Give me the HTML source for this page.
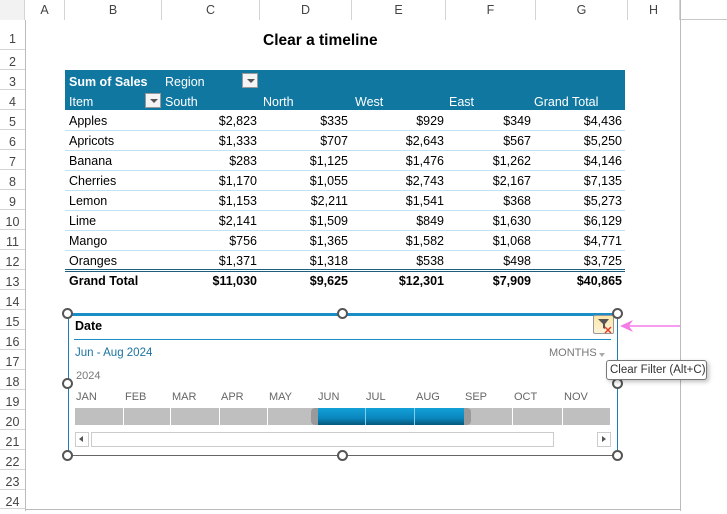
<!DOCTYPE html><html><head><style>
*{margin:0;padding:0;box-sizing:border-box}
body{width:727px;height:511px;background:#fff;position:relative;overflow:hidden;font-family:"Liberation Sans",sans-serif;font-size:12.5px;color:#000}
.a{position:absolute}
.ch{position:absolute;top:0;height:20px;line-height:21px;text-align:center;color:#444;font-size:12.5px;border-right:1px solid #d4d4d4;background:#fff}
.rh{position:absolute;left:0;width:25px;text-align:center;color:#444;border-bottom:1px solid #d4d4d4}
.v{position:absolute;text-align:right}
.hd{position:absolute;color:#fff}
.hl{position:absolute;width:11px;height:11px;border:2px solid #555;border-radius:50%;background:#fff}
.m{position:absolute;top:391px;color:#666;font-size:11px}
</style></head><body>
<div class="a" style="left:0;top:0;width:727px;height:20px;background:#fff;border-bottom:1px solid #c8c8c8"></div>
<div class="a" style="left:0;top:0;width:25px;height:20px;background:#f2f2f2;border-right:1px solid #d4d4d4"></div>
<div class="ch" style="left:25px;width:40px">A</div>
<div class="ch" style="left:65px;width:97px">B</div>
<div class="ch" style="left:162px;width:98px">C</div>
<div class="ch" style="left:260px;width:92px">D</div>
<div class="ch" style="left:352px;width:94px">E</div>
<div class="ch" style="left:446px;width:90px">F</div>
<div class="ch" style="left:536px;width:92px">G</div>
<div class="ch" style="left:628px;width:52px">H</div>
<div class="a" style="left:25px;top:20px;width:1px;height:491px;background:#bbb"></div>
<div class="a" style="left:680px;top:0;width:1px;height:511px;background:#bbb"></div>
<div class="a" style="left:25px;top:509px;width:656px;height:1px;background:#bbb"></div>
<div class="rh" style="top:20px;height:30px;line-height:38px">1</div>
<div class="rh" style="top:50px;height:20px;line-height:24px">2</div>
<div class="rh" style="top:70px;height:20px;line-height:24px">3</div>
<div class="rh" style="top:90px;height:20px;line-height:24px">4</div>
<div class="rh" style="top:110px;height:20px;line-height:24px">5</div>
<div class="rh" style="top:130px;height:20px;line-height:24px">6</div>
<div class="rh" style="top:150px;height:20px;line-height:24px">7</div>
<div class="rh" style="top:170px;height:20px;line-height:24px">8</div>
<div class="rh" style="top:190px;height:20px;line-height:24px">9</div>
<div class="rh" style="top:210px;height:20px;line-height:24px">10</div>
<div class="rh" style="top:230px;height:20px;line-height:24px">11</div>
<div class="rh" style="top:250px;height:20px;line-height:24px">12</div>
<div class="rh" style="top:270px;height:20px;line-height:24px">13</div>
<div class="rh" style="top:290px;height:20px;line-height:24px">14</div>
<div class="rh" style="top:310px;height:20px;line-height:24px">15</div>
<div class="rh" style="top:330px;height:20px;line-height:24px">16</div>
<div class="rh" style="top:350px;height:20px;line-height:24px">17</div>
<div class="rh" style="top:370px;height:20px;line-height:24px">18</div>
<div class="rh" style="top:390px;height:20px;line-height:24px">19</div>
<div class="rh" style="top:410px;height:20px;line-height:24px">20</div>
<div class="rh" style="top:430px;height:20px;line-height:24px">21</div>
<div class="rh" style="top:450px;height:20px;line-height:24px">22</div>
<div class="rh" style="top:470px;height:20px;line-height:24px">23</div>
<div class="rh" style="top:490px;height:19px;line-height:24px">24</div>

<div class="a" style="left:263px;top:32px;font-weight:bold;font-size:15.5px">Clear a timeline</div>

<div class="a" style="left:65px;top:70px;width:560px;height:40px;background:#0f77a0"></div>
<div class="hd" style="left:69px;top:75px;font-weight:bold">Sum of Sales</div>
<div class="hd" style="left:165px;top:75px">Region</div>
<div class="a" style="left:242px;top:73px;width:16px;height:15px;background:#f4f4f4;border:1px solid #999"><div class="a" style="left:4px;top:5px;border-left:4px solid transparent;border-right:4px solid transparent;border-top:4px solid #555"></div></div>
<div class="hd" style="left:69px;top:95px">Item</div>
<div class="a" style="left:145px;top:93px;width:16px;height:15px;background:#f4f4f4;border:1px solid #999"><div class="a" style="left:4px;top:5px;border-left:4px solid transparent;border-right:4px solid transparent;border-top:4px solid #555"></div></div>
<div class="hd" style="left:165px;top:95px">South</div>
<div class="hd" style="left:263px;top:95px">North</div>
<div class="hd" style="left:355px;top:95px">West</div>
<div class="hd" style="left:449px;top:95px">East</div>
<div class="hd" style="left:534px;top:95px">Grand Total</div>

<div id="rows"></div>
<script>
var d=[["Apples","$2,823","$335","$929","$349","$4,436"],["Apricots","$1,333","$707","$2,643","$567","$5,250"],["Banana","$283","$1,125","$1,476","$1,262","$4,146"],["Cherries","$1,170","$1,055","$2,743","$2,167","$7,135"],["Lemon","$1,153","$2,211","$1,541","$368","$5,273"],["Lime","$2,141","$1,509","$849","$1,630","$6,129"],["Mango","$756","$1,365","$1,582","$1,068","$4,771"],["Oranges","$1,371","$1,318","$538","$498","$3,725"],["Grand Total","$11,030","$9,625","$12,301","$7,909","$40,865"]];
var ends=[257,348,444,531,622],h="";
d.forEach(function(r,i){var y=114+i*20,b=i==8?"font-weight:bold;":"";
h+='<div class="a" style="left:69px;top:'+y+'px;'+b+'">'+r[0]+'</div>';
for(var j=1;j<6;j++)h+='<div class="v" style="'+b+'left:'+(ends[j-1]-90)+'px;width:90px;top:'+y+'px">'+r[j]+'</div>';
if(i<7)h+='<div class="a" style="left:65px;top:'+(130+i*20)+'px;width:560px;height:1px;background:#bfe3f2"></div>';});
h+='<div class="a" style="left:65px;top:269px;width:560px;height:1px;background:#1d5f7a"></div><div class="a" style="left:65px;top:271px;width:560px;height:1px;background:#1d5f7a"></div>';
document.getElementById("rows").innerHTML=h;
</script>

<!-- timeline -->
<div class="a" style="left:68px;top:314px;width:550px;height:142px;border:1.5px solid #666;border-left:1.5px solid #1a7db8;border-top:2px solid #1a8dc6;border-right:1.5px solid #1a7db8;background:#fff"></div>
<div class="a" style="left:68px;top:313px;width:550px;height:1.5px;background:#1a8dc6"></div>
<div class="a" style="left:75px;top:319px;font-weight:bold;font-size:12.5px">Date</div>
<div class="a" style="left:74px;top:339px;width:537px;height:1px;background:#1a8dc6"></div>
<div class="a" style="left:75px;top:347px;color:#1a73a0;font-size:11.5px">Jun - Aug 2024</div>
<div class="a" style="left:549px;top:347px;color:#777;font-size:11px">MONTHS</div>
<div class="a" style="left:599px;top:353px;border-left:3.5px solid transparent;border-right:3.5px solid transparent;border-top:4px solid #aaa"></div>
<div class="a" style="left:76px;top:370px;color:#777;font-size:11px">2024</div>
<div class="m" style="left:76px">JAN</div><div class="m" style="left:125px">FEB</div><div class="m" style="left:172px">MAR</div><div class="m" style="left:221px">APR</div><div class="m" style="left:269px">MAY</div><div class="m" style="left:318px">JUN</div><div class="m" style="left:366px">JUL</div><div class="m" style="left:416px">AUG</div><div class="m" style="left:465px">SEP</div><div class="m" style="left:514px">OCT</div><div class="m" style="left:564px">NOV</div>
<div class="a" style="left:75px;top:408px;width:535px;height:17px;background:#bfbfbf"></div>
<div class="a" style="left:123px;top:408px;width:1px;height:17px;background:#fff"></div>
<div class="a" style="left:170px;top:408px;width:1px;height:17px;background:#fff"></div>
<div class="a" style="left:219px;top:408px;width:1px;height:17px;background:#fff"></div>
<div class="a" style="left:267px;top:408px;width:1px;height:17px;background:#fff"></div>
<div class="a" style="left:512px;top:408px;width:1px;height:17px;background:#fff"></div>
<div class="a" style="left:562px;top:408px;width:1px;height:17px;background:#fff"></div>
<div class="a" style="left:311px;top:408px;width:160px;height:17px;background:#9a9a9a;border-radius:4px"></div>
<div class="a" style="left:318px;top:408px;width:146px;height:17px;background:linear-gradient(#13a0d8,#0a86bd 60%,#06587a)"></div>
<div class="a" style="left:365px;top:408px;width:1px;height:17px;background:#7fd0f0"></div>
<div class="a" style="left:414px;top:408px;width:1px;height:17px;background:#7fd0f0"></div>
<div class="a" style="left:75px;top:432px;width:14px;height:15px;border:1px solid #ccc"><div class="a" style="left:3px;top:3px;border-top:3.5px solid transparent;border-bottom:3.5px solid transparent;border-right:4px solid #555"></div></div>
<div class="a" style="left:91px;top:432px;width:463px;height:15px;border:1px solid #ccc"></div>
<div class="a" style="left:597px;top:432px;width:14px;height:15px;border:1px solid #ccc"><div class="a" style="left:4px;top:3px;border-top:3.5px solid transparent;border-bottom:3.5px solid transparent;border-left:4px solid #555"></div></div>

<div class="a" style="left:593px;top:315px;width:21px;height:19px;border:1px solid #999;border-radius:2px;background:linear-gradient(#fbe6a8,#fdf3d8)">
<svg width="21" height="19" style="position:absolute;left:0;top:0"><path d="M4 3h11l-4 5v5l-2-1V8z" fill="#555"/><path d="M11 11l6 6M17 11l-6 6" stroke="#e0402a" stroke-width="1.5"/></svg></div>

<div class="hl" style="left:62px;top:308px"></div><div class="hl" style="left:337px;top:308px"></div><div class="hl" style="left:612px;top:308px"></div>
<div class="hl" style="left:62px;top:378px"></div><div class="hl" style="left:612px;top:378px"></div>
<div class="hl" style="left:62px;top:450px"></div><div class="hl" style="left:337px;top:450px"></div><div class="hl" style="left:612px;top:450px"></div>

<div class="a" style="left:606px;top:360px;width:101px;height:20px;border:1px solid #777;border-radius:3px;background:#fff;box-shadow:2px 2px 4px rgba(0,0,0,.25);font-size:11.5px;line-height:18px;padding-left:3px;color:#333">Clear Filter (Alt+C)</div>

<svg class="a" style="left:617px;top:318px" width="64" height="16"><path d="M63 8H8" stroke="#f47ce8" stroke-width="1.5"/><path d="M3 8l13-6-4 6 4 6z" fill="#f47ce8"/></svg>
</body></html>
